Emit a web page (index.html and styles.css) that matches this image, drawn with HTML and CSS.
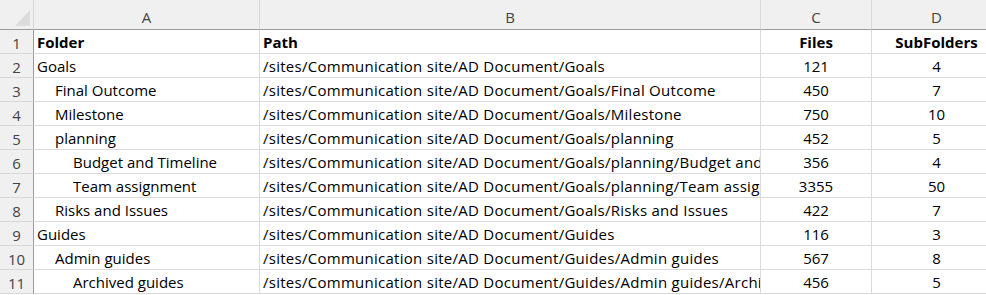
FILE: index.html
```html
<!DOCTYPE html>
<html>
<head>
<meta charset="utf-8">
<link rel="stylesheet" href="styles.css">
</head>
<body>
<div class="sheet">
  <div class="hd corner"><span class="tri"></span></div>
  <div class="hd col">A</div>
  <div class="hd col">B</div>
  <div class="hd col">C</div>
  <div class="hd col">D</div>

  <div class="hd rn">1</div>
  <div class="c b">Folder</div>
  <div class="c b">Path</div>
  <div class="c b n">Files</div>
  <div class="c b n">SubFolders</div>

  <div class="hd rn">2</div>
  <div class="c">Goals</div>
  <div class="c p">/sites/Communication site/AD Document/Goals</div>
  <div class="c n">121</div>
  <div class="c n">4</div>

  <div class="hd rn">3</div>
  <div class="c l1">Final Outcome</div>
  <div class="c p">/sites/Communication site/AD Document/Goals/Final Outcome</div>
  <div class="c n">450</div>
  <div class="c n">7</div>

  <div class="hd rn">4</div>
  <div class="c l1">Milestone</div>
  <div class="c p">/sites/Communication site/AD Document/Goals/Milestone</div>
  <div class="c n">750</div>
  <div class="c n">10</div>

  <div class="hd rn">5</div>
  <div class="c l1">planning</div>
  <div class="c p">/sites/Communication site/AD Document/Goals/planning</div>
  <div class="c n">452</div>
  <div class="c n">5</div>

  <div class="hd rn">6</div>
  <div class="c l2">Budget and Timeline</div>
  <div class="c p">/sites/Communication site/AD Document/Goals/planning/Budget and Timeline</div>
  <div class="c n">356</div>
  <div class="c n">4</div>

  <div class="hd rn">7</div>
  <div class="c l2">Team assignment</div>
  <div class="c p">/sites/Communication site/AD Document/Goals/planning/Team assignment</div>
  <div class="c n">3355</div>
  <div class="c n">50</div>

  <div class="hd rn">8</div>
  <div class="c l1">Risks and Issues</div>
  <div class="c p">/sites/Communication site/AD Document/Goals/Risks and Issues</div>
  <div class="c n">422</div>
  <div class="c n">7</div>

  <div class="hd rn">9</div>
  <div class="c">Guides</div>
  <div class="c p">/sites/Communication site/AD Document/Guides</div>
  <div class="c n">116</div>
  <div class="c n">3</div>

  <div class="hd rn">10</div>
  <div class="c l1">Admin guides</div>
  <div class="c p">/sites/Communication site/AD Document/Guides/Admin guides</div>
  <div class="c n">567</div>
  <div class="c n">8</div>

  <div class="hd rn">11</div>
  <div class="c l2">Archived guides</div>
  <div class="c p">/sites/Communication site/AD Document/Guides/Admin guides/Archived guides</div>
  <div class="c n">456</div>
  <div class="c n">5</div>
</div>
</body>
</html>
```

FILE: styles.css
```css
html, body {
  margin: 0;
  padding: 0;
  background: #ffffff;
}

.sheet {
  display: grid;
  grid-template-columns: 34px 226px 501px 111px 130px;
  grid-template-rows: 30px repeat(11, 24px);
  font-family: "Open Sans", "Liberation Sans", sans-serif;
  font-size: 15px;
  color: #000;
  width: 1002px;
}

.hd {
  background: #f0f0f0;
  color: #444;
  box-sizing: border-box;
  display: flex;
  align-items: center;
  justify-content: center;
  font-size: 15px;
}

.col {
  border-right: 1px solid #d8d8d8;
  border-bottom: 1px solid #9c9c9c;
  padding-top: 4px;
}

.corner {
  border-right: 1px solid #d8d8d8;
  border-bottom: 1px solid #9c9c9c;
  position: relative;
}

.tri {
  position: absolute;
  left: 15px;
  top: 10px;
  width: 0;
  height: 0;
  border-left: 15px solid transparent;
  border-bottom: 16px solid #dcdcdc;
}

.rn {
  border-right: 1px solid #9c9c9c;
  border-bottom: 1px solid #d8d8d8;
  padding-top: 2px;
}

.c {
  box-sizing: border-box;
  border-right: 1px solid #dadada;
  border-bottom: 1px solid #dadada;
  padding: 2px 3px 0 3px;
  line-height: 21px;
  white-space: nowrap;
  overflow: hidden;
}

.p {
  letter-spacing: 0.27px;
}

.b {
  font-weight: bold;
}

.n {
  text-align: center;
}

.l1 {
  padding-left: 21px;
}

.l2 {
  padding-left: 39px;
}
```
